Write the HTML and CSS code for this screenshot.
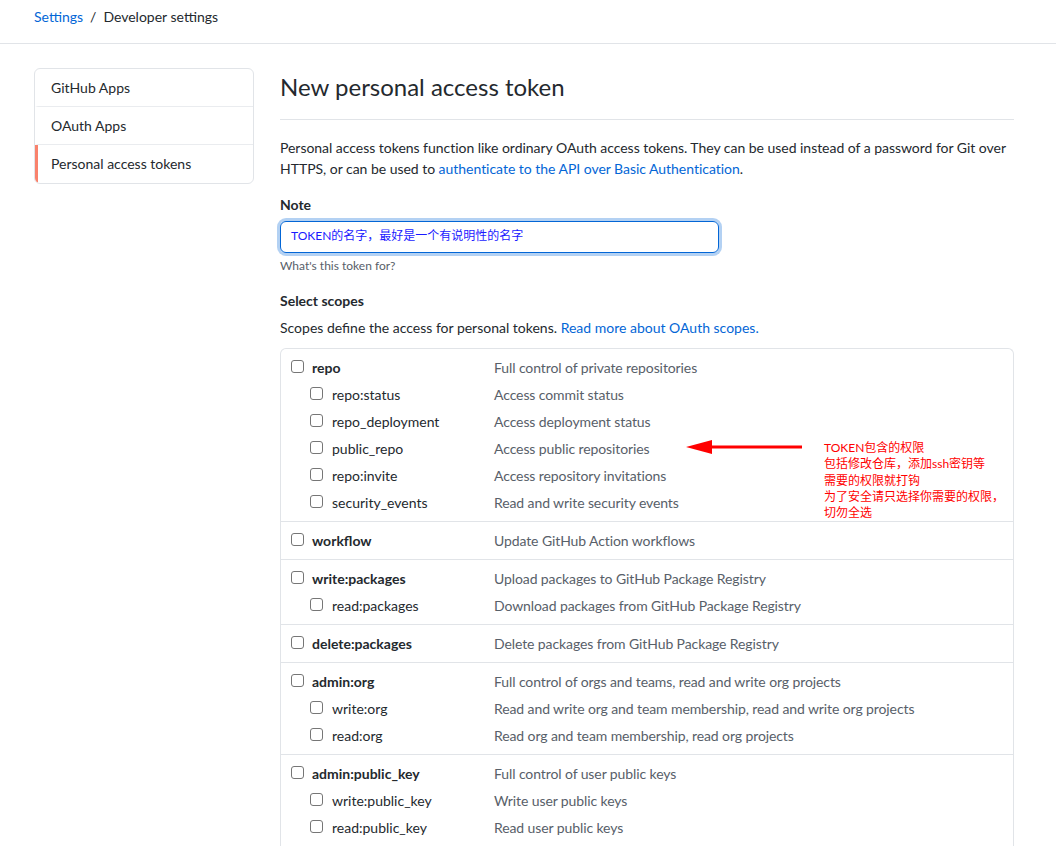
FILE: index.html
```html
<!DOCTYPE html>
<html lang="en">
<head>
<meta charset="utf-8">
<title>New personal access token</title>
<link rel="stylesheet" href="styles.css">
</head>
<body>
<header class="topbar">
  <nav class="crumbs"><a href="#">Settings</a><span class="sep">/</span><span>Developer settings</span></nav>
</header>
<div class="layout">
  <aside class="menu">
    <a class="menu-item" href="#">GitHub Apps</a>
    <a class="menu-item" href="#">OAuth Apps</a>
    <a class="menu-item active" href="#">Personal access tokens</a>
  </aside>
  <main class="main">
    <h2 class="title">New personal access token</h2>
    <p class="lead">Personal access tokens function like ordinary OAuth access tokens. They can be used instead of a password for Git over HTTPS, or can be used to <a href="#">authenticate to the API over Basic Authentication</a>.</p>
    <div class="field">
      <label class="label">Note</label>
      <div class="input">TOKEN的名字，最好是一个有说明性的名字</div>
      <p class="note">What's this token for?</p>
    </div>
    <h3 class="label scopes-title">Select scopes</h3>
    <p class="scopes-text">Scopes define the access for personal tokens. <a href="#">Read more about OAuth scopes.</a></p>
    <div class="scopes">
      <div class="group">
        <div class="row top"><span class="cb"></span><span class="name">repo</span><span class="desc">Full control of private repositories</span></div>
        <div class="row sub"><span class="cb"></span><span class="name">repo:status</span><span class="desc">Access commit status</span></div>
        <div class="row sub"><span class="cb"></span><span class="name">repo_deployment</span><span class="desc">Access deployment status</span></div>
        <div class="row sub"><span class="cb"></span><span class="name">public_repo</span><span class="desc">Access public repositories</span></div>
        <div class="row sub"><span class="cb"></span><span class="name">repo:invite</span><span class="desc">Access repository invitations</span></div>
        <div class="row sub"><span class="cb"></span><span class="name">security_events</span><span class="desc">Read and write security events</span></div>
      </div>
      <div class="group">
        <div class="row top"><span class="cb"></span><span class="name">workflow</span><span class="desc">Update GitHub Action workflows</span></div>
      </div>
      <div class="group">
        <div class="row top"><span class="cb"></span><span class="name">write:packages</span><span class="desc">Upload packages to GitHub Package Registry</span></div>
        <div class="row sub"><span class="cb"></span><span class="name">read:packages</span><span class="desc">Download packages from GitHub Package Registry</span></div>
      </div>
      <div class="group">
        <div class="row top"><span class="cb"></span><span class="name">delete:packages</span><span class="desc">Delete packages from GitHub Package Registry</span></div>
      </div>
      <div class="group">
        <div class="row top"><span class="cb"></span><span class="name">admin:org</span><span class="desc">Full control of orgs and teams, read and write org projects</span></div>
        <div class="row sub"><span class="cb"></span><span class="name">write:org</span><span class="desc">Read and write org and team membership, read and write org projects</span></div>
        <div class="row sub"><span class="cb"></span><span class="name">read:org</span><span class="desc">Read org and team membership, read org projects</span></div>
      </div>
      <div class="group">
        <div class="row top"><span class="cb"></span><span class="name">admin:public_key</span><span class="desc">Full control of user public keys</span></div>
        <div class="row sub"><span class="cb"></span><span class="name">write:public_key</span><span class="desc">Write user public keys</span></div>
        <div class="row sub"><span class="cb"></span><span class="name">read:public_key</span><span class="desc">Read user public keys</span></div>
      </div>
      <div class="annotation">
        <svg class="arrow" width="118" height="16" viewBox="0 0 118 16"><path d="M26 8 H116" stroke="#ff0000" stroke-width="3"/><path d="M0 8 L26 1 L26 15 Z" fill="#ff0000"/></svg>
        <div class="ann-text">TOKEN包含的权限<br>包括修改仓库，添加ssh密钥等<br>需要的权限就打钩<br>为了安全请只选择你需要的权限，<br>切勿全选</div>
      </div>
    </div>
  </main>
</div>
</body>
</html>
```
FILE: styles.css
```css
* { box-sizing: border-box; }
html, body { margin: 0; padding: 0; background: #fff; }
body {
  font-family: "Lato", "Noto Sans CJK SC", sans-serif;
  font-size: 14px;
  line-height: 21px;
  color: #24292e;
  overflow: hidden;
  height: 846px;
}
a { color: #0366d6; text-decoration: none; }

.topbar {
  height: 44px;
  border-bottom: 1px solid #e1e4e8;
  padding: 6px 34px 0;
}
.crumbs { font-size: 14px; line-height: 21px; }
.crumbs .sep { margin: 0 7px; color: #24292e; }

.layout {
  display: flex;
  align-items: flex-start;
  padding: 24px 0 0 34px;
  gap: 26px;
}
.menu {
  width: 220px;
  border: 1px solid #e1e4e8;
  border-radius: 6px;
  display: flex;
  flex-direction: column;
  overflow: hidden;
}
.menu-item {
  display: block;
  height: 38px;
  line-height: 37px;
  padding: 0 16px 0 13px;
  color: #24292e;
  border-bottom: 1px solid #eaecef;
  border-left: 3px solid transparent;
}
.menu-item:last-child { border-bottom: 0; }
.menu-item.active { border-left-color: #f9826c; }

.main { width: 734px; }
.title {
  margin: 4px 0 0;
  font-size: 24px;
  line-height: 30px;
  font-weight: 400;
  padding-bottom: 17px;
  border-bottom: 1px solid #e1e4e8;
}
.lead { margin: 17px 0 0; letter-spacing: -0.03px; }
.field { margin-top: 15px; }
.label { display: block; font-weight: 700; font-size: 14px; line-height: 21px; margin: 0; }
.input {
  margin-top: 6px;
  width: 439px;
  height: 32px;
  border: 1px solid #0366d6;
  border-radius: 6px;
  box-shadow: 0 0 0 3px rgba(3, 102, 214, 0.3);
  padding: 0 11px 0 10px;
  line-height: 28px;
  font-size: 12px;
  color: #1a1aff;
}
.note { margin: 4px 0 0; font-size: 12px; line-height: 18px; color: #586069; }
.scopes-title { margin-top: 15px; }
.scopes-text { margin: 6px 0 0; }

.scopes {
  position: relative;
  margin-top: 10px;
  border: 1px solid #e1e4e8;
  border-radius: 6px 6px 0 0;
  border-bottom: 0;
}
.group {
  padding: 5px 10px;
  border-bottom: 1px solid #e1e4e8;
}
.row {
  display: flex;
  align-items: center;
  height: 27px;
}
.row.sub { padding-left: 19px; }
.cb {
  flex: none;
  width: 13px;
  height: 13px;
  border: 1px solid #767676;
  border-radius: 3px;
  margin-right: 8px;
  margin-top: -2px;
}
.row.sub .cb { margin-right: 9px; }
.row.top .name { font-weight: 700; width: 182px; flex: none; }
.row.sub .name { width: 162px; flex: none; }
.desc { color: #586069; letter-spacing: -0.1px; }

.annotation {
  position: absolute;
  left: 405px;
  top: 89px;
  display: flex;
  align-items: flex-start;
  gap: 20px;
}
.arrow { margin-top: 1px; }
.ann-text {
  color: #ff0000;
  font-size: 12px;
  line-height: 16.3px;
  padding-top: 2px;
}
```
